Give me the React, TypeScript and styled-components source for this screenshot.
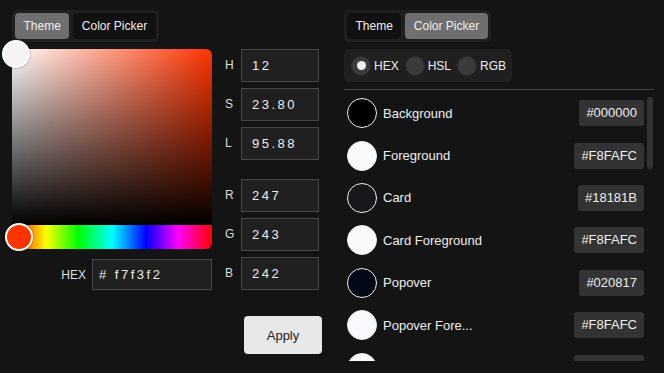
import styled, { createGlobalStyle } from "styled-components";

const GlobalStyle = createGlobalStyle`
  body {
    margin: 0;
    background: #141414;
    font-family: "Liberation Sans", Arial, sans-serif;
    color: #eeeeee;
  }
`;

const Page = styled.div`
  display: flex;
  gap: 22px;
  padding: 10px 0 0 12px;
  height: 373px;
  box-sizing: border-box;
  overflow: hidden;
`;

const Panel = styled.div`
  width: 310px;
  display: flex;
  flex-direction: column;
`;

const Tabs = styled.div`
  display: flex;
  align-self: flex-start;
  gap: 4px;
  padding: 3px;
  background: #1f1f1f;
  border-radius: 5px;
`;

const Tab = styled.div<{ $active?: boolean }>`
  height: 26px;
  line-height: 26px;
  padding: 0 8.5px;
  font-size: 12px;
  border-radius: 4px;
  color: #eeeeee;
  background: ${(p) => (p.$active ? "#6f6f6f" : "#111111")};
`;

const PickerRow = styled.div`
  display: flex;
  gap: 13px;
  margin-top: 7px;
`;

const PickerCol = styled.div`
  width: 200px;
  display: flex;
  flex-direction: column;
`;

const SatArea = styled.div<{ $hue: number }>`
  position: relative;
  height: 176px;
  border-radius: 6px 6px 0 0;
  background: linear-gradient(to top, #000, rgba(0, 0, 0, 0)),
    linear-gradient(to right, #fff, hsl(${(p) => p.$hue}, 100%, 50%));
`;

const Thumb = styled.div<{ $fill: string }>`
  position: absolute;
  width: 28px;
  height: 28px;
  box-sizing: border-box;
  border-radius: 50%;
  border: 2px solid #ffffff;
  background: ${(p) => p.$fill};
  box-shadow: 0 0 2px rgba(0, 0, 0, 0.5);
`;

const SatThumb = styled(Thumb)`
  left: -10px;
  top: -9px;
`;

const HueBar = styled.div`
  position: relative;
  height: 24px;
  border-radius: 0 0 6px 6px;
  background: linear-gradient(
    to right,
    #f00 0%,
    #ff0 17%,
    #0f0 33%,
    #0ff 50%,
    #00f 67%,
    #f0f 83%,
    #f00 100%
  );
`;

const HueThumb = styled(Thumb)`
  left: -7px;
  top: -2px;
`;

const HexRow = styled.div`
  display: flex;
  justify-content: flex-end;
  align-items: center;
  gap: 6px;
  margin-top: 10px;
`;

const SmallLabel = styled.span`
  font-size: 12px;
  color: #dddddd;
`;

const HexBox = styled.div`
  width: 120px;
  height: 31px;
  box-sizing: border-box;
  display: flex;
  align-items: center;
  padding-left: 6px;
  background: #202020;
  border: 1px solid #474747;
  font-size: 13px;
  letter-spacing: 2.5px;
  color: #eeeeee;
`;

const FieldsCol = styled.div`
  display: flex;
  flex-direction: column;
`;

const FieldRow = styled.div<{ $gap: number }>`
  display: flex;
  align-items: center;
  margin-top: ${(p) => p.$gap}px;
`;

const FieldLabel = styled(SmallLabel)`
  width: 16px;
  margin-top: -1px;
`;

const FieldInput = styled.input`
  width: 78px;
  height: 33px;
  box-sizing: border-box;
  padding: 0 10px;
  background: #202020;
  border: 1px solid #474747;
  color: #eeeeee;
  font-family: "Liberation Sans", Arial, sans-serif;
  font-size: 13px;
  letter-spacing: 2.5px;
  outline: none;
`;

const ApplyButton = styled.button`
  margin: 26px 0 0 19px;
  width: 78px;
  height: 38px;
  border: none;
  border-radius: 4px;
  background: #e8e8e8;
  color: #222222;
  font-family: "Liberation Sans", Arial, sans-serif;
  font-size: 13px;
`;

const RadioGroup = styled.div`
  display: flex;
  align-self: flex-start;
  align-items: center;
  height: 33px;
  margin-top: 7px;
  padding: 0 6px 0 7px;
  gap: 6px;
  background: #1f1f1f;
  border-radius: 5px;
`;

const RadioItem = styled.div`
  display: flex;
  align-items: center;
  gap: 3px;
  font-size: 12px;
  color: #eeeeee;
`;

const RadioDot = styled.div<{ $checked?: boolean }>`
  width: 20px;
  height: 20px;
  box-sizing: border-box;
  border-radius: 50%;
  background: #3a3a3a;
  border: 1px solid #2c2c2c;
  display: flex;
  align-items: center;
  justify-content: center;

  &::after {
    content: "";
    width: 9px;
    height: 9px;
    border-radius: 50%;
    background: ${(p) => (p.$checked ? "#eeeeee" : "transparent")};
  }
`;

const Divider = styled.div`
  height: 1px;
  margin-top: 7px;
  background: #444444;
`;

const ListArea = styled.div`
  display: flex;
  height: 269px;
  margin-top: 2px;
  overflow: hidden;
`;

const Rows = styled.div`
  width: 300px;
  display: flex;
  flex-direction: column;
  flex-shrink: 0;
`;

const ScrollTrack = styled.div`
  width: 6px;
  margin-left: 3px;
  padding-top: 5px;
`;

const ScrollThumb = styled.div`
  height: 72px;
  border-radius: 3px;
  background: #333333;
`;

const Row = styled.div`
  height: 42.4px;
  flex-shrink: 0;
  display: flex;
  align-items: center;
  gap: 6px;
  padding-left: 3px;
`;

const Swatch = styled.div<{ $color: string }>`
  width: 30px;
  height: 30px;
  box-sizing: border-box;
  flex-shrink: 0;
  border-radius: 50%;
  border: 1px solid #eeeeee;
  background: ${(p) => p.$color};
`;

const RowName = styled.span`
  flex: 1;
  font-size: 13px;
  color: #eeeeee;
  white-space: nowrap;
`;

const Badge = styled.span`
  height: 26px;
  line-height: 26px;
  padding: 0 7px;
  border-radius: 3px;
  background: #333333;
  font-size: 13px;
  color: #eeeeee;
`;

const themeColors = [
  { name: "Background", hex: "#000000" },
  { name: "Foreground", hex: "#F8FAFC" },
  { name: "Card", hex: "#18181B" },
  { name: "Card Foreground", hex: "#F8FAFC" },
  { name: "Popover", hex: "#020817" },
  { name: "Popover Foreground", hex: "#F8FAFC" },
  { name: "Primary", hex: "#F8FAFC" },
  { name: "Primary Foreground", hex: "#0F172A" },
  { name: "Secondary", hex: "#1E293B" },
  { name: "Secondary Foreground", hex: "#F8FAFC" },
  { name: "Muted", hex: "#1E293B" },
  { name: "Muted Foreground", hex: "#94A3B8" },
];

const fields = [
  { label: "H", value: "12", gap: 0 },
  { label: "S", value: "23.80", gap: 6 },
  { label: "L", value: "95.88", gap: 6 },
  { label: "R", value: "247", gap: 19 },
  { label: "G", value: "243", gap: 6 },
  { label: "B", value: "242", gap: 6 },
];

const shorten = (s: string) => (s.length > 15 ? s.slice(0, 12) + "..." : s);

export default function App() {
  return (
    <>
      <GlobalStyle />
      <Page>
        <Panel>
          <Tabs>
            <Tab $active>Theme</Tab>
            <Tab>Color Picker</Tab>
          </Tabs>
          <PickerRow>
            <PickerCol>
              <SatArea $hue={12}>
                <SatThumb $fill="#f7f3f2" />
              </SatArea>
              <HueBar>
                <HueThumb $fill="#ff3300" />
              </HueBar>
              <HexRow>
                <SmallLabel>HEX</SmallLabel>
                <HexBox># f7f3f2</HexBox>
              </HexRow>
            </PickerCol>
            <FieldsCol>
              {fields.map((f) => (
                <FieldRow key={f.label} $gap={f.gap}>
                  <FieldLabel>{f.label}</FieldLabel>
                  <FieldInput readOnly value={f.value} />
                </FieldRow>
              ))}
              <ApplyButton>Apply</ApplyButton>
            </FieldsCol>
          </PickerRow>
        </Panel>

        <Panel>
          <Tabs>
            <Tab>Theme</Tab>
            <Tab $active>Color Picker</Tab>
          </Tabs>
          <RadioGroup>
            <RadioItem>
              <RadioDot $checked />
              HEX
            </RadioItem>
            <RadioItem>
              <RadioDot />
              HSL
            </RadioItem>
            <RadioItem>
              <RadioDot />
              RGB
            </RadioItem>
          </RadioGroup>
          <Divider />
          <ListArea>
            <Rows>
              {themeColors.map((c) => (
                <Row key={c.name}>
                  <Swatch $color={c.hex} />
                  <RowName>{shorten(c.name)}</RowName>
                  <Badge>{c.hex}</Badge>
                </Row>
              ))}
            </Rows>
            <ScrollTrack>
              <ScrollThumb />
            </ScrollTrack>
          </ListArea>
        </Panel>
      </Page>
    </>
  );
}
